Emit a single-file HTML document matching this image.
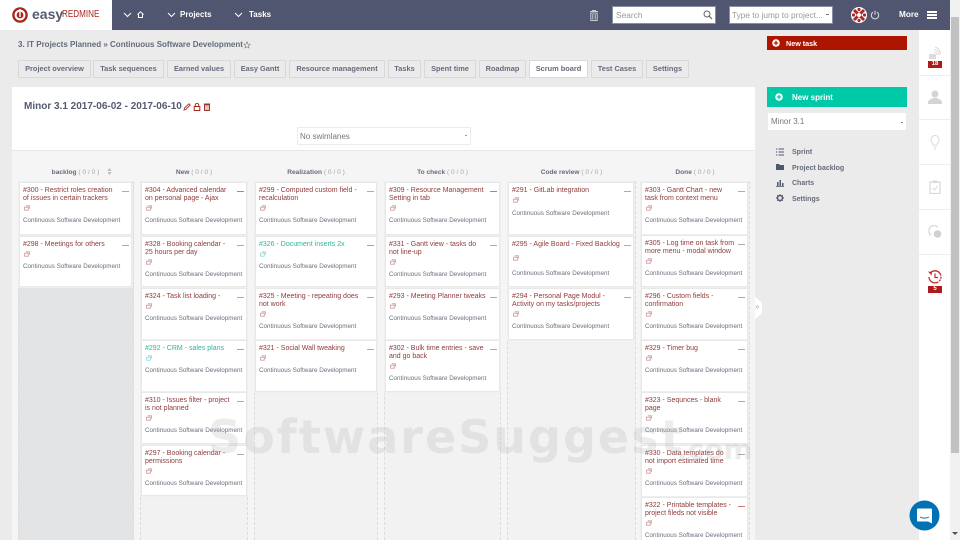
<!DOCTYPE html>
<html><head><meta charset="utf-8"><style>
html,body{margin:0;padding:0;width:960px;height:540px;overflow:hidden;background:#ebebeb;font-family:"Liberation Sans",sans-serif;color:#555b70}
body{filter:blur(.3px)}
div,span,svg,b,i{position:absolute;display:block}
.tb{top:60px;height:16px;border:1px solid #d9d9d9;line-height:16px;text-align:center;font-size:7.4px;font-weight:bold;color:#666b7c;background:#ebebeb;white-space:nowrap}
.col{top:181px;height:359px;background:#f2f2f2;border-left:1px dashed #dcdcdc;border-right:1px dashed #dcdcdc;box-sizing:border-box;border-top:2px solid #d8d8d8}
.h{top:168px;height:9px;line-height:9px;text-align:center;font-size:6.6px;font-weight:bold;color:#666b7c;white-space:nowrap}
.h em{font-style:normal;font-weight:normal;color:#a5a5a5}
.c{background:#fff;box-shadow:0 0 0 1px #e8e8e8,0 0 0 2px #efefef;font-size:7px;white-space:nowrap;overflow:hidden}
.c b{position:static;font-weight:normal;color:#8f3b3b;line-height:7.8px;margin:4px 0 0 3px}
.c.g b{color:#2fb59b}
.c svg{position:static;display:block;margin:2px 0 0 4px;width:6px;height:6px}
.c span{position:static;color:#6b6f7c;font-size:6.3px;line-height:8px;margin:6px 0 0 3px}
.c u{position:absolute;right:2px;top:8px;width:7px;height:1px;background:#aaa}
.c.r u{background:#c77}
.m{left:792px;font-size:7px;font-weight:bold;color:#666b7c;height:9px;line-height:9px}
.d{left:919px;width:31px;height:1px;background:#eee}
.bd{left:928px;width:14px;height:7px;background:#ae1a1a;color:#fff;font-size:6px;font-weight:bold;line-height:7px;text-align:center}
</style></head><body>

<div style="left:0;top:0;width:950px;height:30px;background:#50566f"></div>
<div style="left:0;top:0;width:112px;height:30px;background:#fff"></div>
<svg style="left:12px;top:7px" width="16" height="16" viewBox="0 0 16 16"><circle cx="8" cy="8" r="6.6" fill="none" stroke="#a8281e" stroke-width="2.4"/><circle cx="8" cy="8" r="3.4" fill="#a8281e"/><rect x="7.3" y="2" width="1.4" height="8" fill="#fff"/></svg>
<div style="left:32px;top:5px;font-size:14px;font-weight:bold;color:#555b70;line-height:19px">easy</div>
<div style="left:62px;top:9px;font-size:10.4px;color:#a8281e;line-height:12px;transform:scaleX(.78);transform-origin:left;white-space:nowrap">REDMINE</div>

<svg style="left:123px;top:12px" width="9" height="6" viewBox="0 0 9 6"><path d="M1 1l3.5 3.5L8 1" fill="none" stroke="#fff"/></svg>
<svg style="left:137px;top:11px" width="7" height="7" viewBox="0 0 7 7"><path d="M.5 3.5L3.5.8l3 2.7M1.5 3v3.5h4V3" fill="none" stroke="#fff"/></svg>
<svg style="left:167px;top:12px" width="9" height="6" viewBox="0 0 9 6"><path d="M1 1l3.5 3.5L8 1" fill="none" stroke="#fff"/></svg>
<div style="left:180px;top:10px;font-size:8px;font-weight:bold;color:#fff;line-height:10px">Projects</div>
<svg style="left:234px;top:12px" width="9" height="6" viewBox="0 0 9 6"><path d="M1 1l3.5 3.5L8 1" fill="none" stroke="#fff"/></svg>
<div style="left:249px;top:10px;font-size:8px;font-weight:bold;color:#fff;line-height:10px">Tasks</div>

<svg style="left:589px;top:10px" width="10" height="11" viewBox="0 0 10 11"><path d="M1 1.5h8M3.5 1.5V.5h3v1M1.8 3h6.4v7.5H1.8z" fill="none" stroke="#c9ccd5"/><path d="M3.8 4v5.5M6.2 4v5.5" stroke="#c9ccd5"/></svg>
<div style="left:612px;top:6px;width:104px;height:18px;background:#fff;border:1px solid #8a8fa0;box-sizing:border-box;font-size:8.4px;line-height:16px;color:#999;padding-left:3px">Search</div>
<svg style="left:703px;top:10px" width="10" height="10" viewBox="0 0 10 10"><circle cx="4" cy="4" r="3" fill="none" stroke="#666"/><path d="M6.2 6.2L9 9" stroke="#666" stroke-width="1.2"/></svg>
<div style="left:729px;top:6px;width:104px;height:18px;background:#fff;border:1px solid #8a8fa0;box-sizing:border-box;font-size:8.3px;line-height:16px;color:#999;padding-left:2px;white-space:nowrap">Type to jump to project...</div>
<div style="left:826px;top:14px;width:3px;height:1px;background:#777"></div>
<svg style="left:851px;top:7px" width="16" height="16" viewBox="0 0 16 16"><circle cx="8" cy="8" r="8" fill="#fff"/><path d="M3 3l10 10M13 3L3 13" stroke="#a8282c" stroke-width="3"/><circle cx="8" cy="8" r="2" fill="#fff"/><circle cx="8" cy="2.5" r="1.6" fill="#a8282c"/><circle cx="8" cy="13.5" r="1.6" fill="#a8282c"/><circle cx="2.5" cy="8" r="1.6" fill="#a8282c"/><circle cx="13.5" cy="8" r="1.6" fill="#a8282c"/></svg>
<svg style="left:870px;top:10px" width="10" height="10" viewBox="0 0 10 10"><path d="M2.9 2.2a3.7 3.7 0 1 0 4.2 0M5 .8v4" fill="none" stroke="#dfe1e7" stroke-width="1"/></svg>
<div style="left:899px;top:10px;font-size:8.2px;font-weight:bold;color:#fff;line-height:10px">More</div>
<div style="left:927px;top:11px;width:10px;height:1.5px;background:#fff"></div>
<div style="left:927px;top:14px;width:10px;height:1.5px;background:#fff"></div>
<div style="left:927px;top:17px;width:10px;height:1.5px;background:#fff"></div>

<div style="left:18px;top:40px;font-size:8px;font-weight:bold;color:#666b7c;line-height:10px;white-space:nowrap">3. IT Projects Planned » Continuous Software Development</div>
<svg style="left:243px;top:41px" width="8" height="8" viewBox="0 0 8 8"><path d="M4 .8l.9 2.2 2.3.2-1.8 1.500.6 2.300L4 5.800 2 7l.6-2.300L.8 3.200l2.300-.2z" fill="none" stroke="#777" stroke-width=".6"/></svg>

<div class="tb" style="left:18px;width:71px">Project overview</div>
<div class="tb" style="left:93px;width:69px">Task sequences</div>
<div class="tb" style="left:167px;width:62px">Earned values</div>
<div class="tb" style="left:234px;width:50px">Easy Gantt</div>
<div class="tb" style="left:289px;width:94px">Resource management</div>
<div class="tb" style="left:388px;width:31px">Tasks</div>
<div class="tb" style="left:424px;width:50px">Spent time</div>
<div class="tb" style="left:479px;width:45px">Roadmap</div>
<div class="tb" style="left:529px;width:57px;background:#fff">Scrum board</div>
<div class="tb" style="left:591px;width:50px">Test Cases</div>
<div class="tb" style="left:646px;width:41px">Settings</div>

<div style="left:12px;top:87px;width:743px;height:63px;background:#fff"></div>
<div style="left:12px;top:150px;width:743px;height:390px;background:#f5f5f5;border-top:1px solid #e8e8e8;box-sizing:border-box"></div>
<div style="left:24px;top:100px;font-size:10px;font-weight:bold;color:#555b70;line-height:13px;white-space:nowrap">Minor 3.1 2017-06-02 - 2017-06-10</div>
<svg style="left:183px;top:103px" width="8" height="8" viewBox="0 0 8 8"><path d="M1 7l.5-2L6 .8l1.200 1.200L2.800 6.500z" fill="none" stroke="#9a3a30" stroke-width=".9"/></svg>
<svg style="left:193px;top:103px" width="8" height="8" viewBox="0 0 8 8"><path d="M2.300 3.500V2a1.700 1.700 0 0 1 3.400 0v1.500M1.200 3.500h5.600v4H1.200z" fill="none" stroke="#a8281e"/></svg>
<svg style="left:203px;top:103px" width="8" height="8" viewBox="0 0 8 8"><path d="M.8 1h6.400M1.500 2h5v5.500h-5z" fill="none" stroke="#9a3a30"/><path d="M3 3v4M5 3v4" stroke="#9a3a30" stroke-width=".6"/></svg>

<div style="left:297px;top:127px;width:174px;height:18px;background:#fff;border:1px solid #ececec;box-sizing:border-box;font-size:8px;line-height:17px;color:#777;padding-left:2px">No swimlanes</div>
<div style="left:465px;top:135px;width:2px;height:1px;background:#999"></div>

<div class="h" style="left:18px;width:115px">backlog <em style="position:static;display:inline">( 0 / 0 )</em></div>
<svg style="left:107px;top:168px" width="5" height="7" viewBox="0 0 5 7"><path d="M2.500 0l2 3h-4zM2.500 7l2-3h-4z" fill="#bbb"/></svg>
<div class="h" style="left:140px;width:108px">New <em style="position:static;display:inline">( 0 / 0 )</em></div>
<div class="h" style="left:254px;width:124px">Realization <em style="position:static;display:inline">( 0 / 0 )</em></div>
<div class="h" style="left:384px;width:117px">To check <em style="position:static;display:inline">( 0 / 0 )</em></div>
<div class="h" style="left:507px;width:129px">Code review <em style="position:static;display:inline">( 0 / 0 )</em></div>
<div class="h" style="left:640px;width:110px">Done <em style="position:static;display:inline">( 0 / 0 )</em></div>

<div class="col" style="left:18px;width:116px;background:#e3e4e6"></div>
<div class="col" style="left:140px;width:108px"></div>
<div class="col" style="left:254px;width:124px"></div>
<div class="col" style="left:384px;width:117px"></div>
<div class="col" style="left:507px;width:129px"></div>
<div class="col" style="left:640px;width:110px"></div>

<svg width="0" height="0" style="left:0;top:0"><defs><symbol id="ic" viewBox="0 0 6 6"><path d="M1.800.8h3.700v3M.6 2.200h3.700v3H.6z" fill="none" stroke="#c99" stroke-width=".8"/></symbol><symbol id="ig" viewBox="0 0 6 6"><path d="M1.800.8h3.700v3M.6 2.200h3.700v3H.6z" fill="none" stroke="#8dd" stroke-width=".8"/></symbol></defs></svg>

<div class="c" style="left:20px;top:183px;width:111px;height:51px"><b>#300 - Restrict roles creation<br>of issues in certain trackers</b><svg><use href="#ic"/></svg><span>Continuous Software Development</span><u></u></div>
<div class="c" style="left:20px;top:237px;width:111px;height:49px"><b>#298 - Meetings for others</b><svg><use href="#ic"/></svg><span>Continuous Software Development</span><u></u></div>

<div class="c r" style="left:142px;top:183px;width:104px;height:51px"><b>#304 - Advanced calendar<br>on personal page - Ajax</b><svg><use href="#ic"/></svg><span>Continuous Software Development</span><u></u></div>
<div class="c" style="left:142px;top:237px;width:104px;height:49px"><b>#328 - Booking calendar -<br>25 hours per day</b><svg><use href="#ic"/></svg><span>Continuous Software Development</span><u></u></div>
<div class="c" style="left:142px;top:289px;width:104px;height:50px"><b>#324 - Task list loading -</b><svg><use href="#ic"/></svg><span>Continuous Software Development</span><u></u></div>
<div class="c g" style="left:142px;top:341px;width:104px;height:50px"><b>#292 - CRM - sales plans</b><svg><use href="#ig"/></svg><span>Continuous Software Development</span><u style="background:#5cb"></u></div>
<div class="c" style="left:142px;top:393px;width:104px;height:50px"><b>#310 - Issues filter - project<br>is not planned</b><svg><use href="#ic"/></svg><span>Continuous Software Development</span><u></u></div>
<div class="c" style="left:142px;top:446px;width:104px;height:49px"><b>#297 - Booking calendar -<br>permissions</b><svg><use href="#ic"/></svg><span>Continuous Software Development</span><u></u></div>

<div class="c" style="left:256px;top:183px;width:120px;height:51px"><b>#299 - Computed custom field -<br>recalculation</b><svg><use href="#ic"/></svg><span>Continuous Software Development</span><u></u></div>
<div class="c g" style="left:256px;top:237px;width:120px;height:49px"><b>#326 - Document inserts 2x</b><svg><use href="#ig"/></svg><span>Continuous Software Development</span><u style="background:#5cb"></u></div>
<div class="c" style="left:256px;top:289px;width:120px;height:50px"><b>#325 - Meeting - repeating does<br>not work</b><svg><use href="#ic"/></svg><span>Continuous Software Development</span><u></u></div>
<div class="c" style="left:256px;top:341px;width:120px;height:50px"><b>#321 - Social Wall tweaking</b><svg><use href="#ic"/></svg><span>Continuous Software Development</span><u></u></div>

<div class="c r" style="left:386px;top:183px;width:113px;height:51px"><b>#309 - Resource Management<br>Setting in tab</b><svg><use href="#ic"/></svg><span>Continuous Software Development</span><u></u></div>
<div class="c" style="left:386px;top:237px;width:113px;height:49px"><b>#331 - Gantt view - tasks do<br>not line-up</b><svg><use href="#ic"/></svg><span>Continuous Software Development</span><u></u></div>
<div class="c" style="left:386px;top:289px;width:113px;height:50px"><b>#293 - Meeting Planner tweaks</b><svg><use href="#ic"/></svg><span>Continuous Software Development</span><u></u></div>
<div class="c" style="left:386px;top:341px;width:113px;height:50px"><b>#302 - Bulk time entries - save<br>and go back</b><svg><use href="#ic"/></svg><span>Continuous Software Development</span><u></u></div>

<div class="c" style="left:509px;top:183px;width:124px;height:51px"><b>#291 - GitLab integration</b><svg><use href="#ic"/></svg><span style="margin-top:7px">Continuous Software Development</span><u></u></div>
<div class="c" style="left:509px;top:237px;width:124px;height:49px"><b>#295 - Agile Board - Fixed Backlog</b><svg style="margin-top:6px"><use href="#ic"/></svg><span style="margin-top:9px">Continuous Software Development</span><u></u></div>
<div class="c" style="left:509px;top:289px;width:124px;height:50px"><b>#294 - Personal Page Modul -<br>Activity on my tasks/projects</b><svg><use href="#ic"/></svg><span>Continuous Software Development</span><u></u></div>

<div class="c" style="left:642px;top:183px;width:105px;height:51px"><b>#303 - Gantt Chart - new<br>task from context menu</b><svg><use href="#ic"/></svg><span>Continuous Software Development</span><u></u></div>
<div class="c" style="left:642px;top:236px;width:105px;height:50px"><b>#305 - Log time on task from<br>more menu - modal window</b><svg><use href="#ic"/></svg><span>Continuous Software Development</span><u></u></div>
<div class="c" style="left:642px;top:289px;width:105px;height:50px"><b>#296 - Custom fields -<br>confirmation</b><svg><use href="#ic"/></svg><span>Continuous Software Development</span><u></u></div>
<div class="c" style="left:642px;top:341px;width:105px;height:50px"><b>#329 - Timer bug</b><svg><use href="#ic"/></svg><span>Continuous Software Development</span><u></u></div>
<div class="c" style="left:642px;top:393px;width:105px;height:50px"><b>#323 - Sequnces - blank<br>page</b><svg><use href="#ic"/></svg><span>Continuous Software Development</span><u></u></div>
<div class="c" style="left:642px;top:446px;width:105px;height:50px"><b>#330 - Data templates do<br>not import estimated time</b><svg><use href="#ic"/></svg><span>Continuous Software Development</span><u></u></div>
<div class="c r" style="left:642px;top:498px;width:105px;height:42px"><b>#322 - Printable templates -<br>project fileds not visible</b><svg><use href="#ic"/></svg><span>Continuous Software Development</span><u></u></div>

<svg style="left:755px;top:297px" width="7" height="22" viewBox="0 0 7 22"><path d="M0 0l7 6v10l-7 6z" fill="#fff"/></svg>
<div style="left:755px;top:302px;font-size:8px;line-height:10px;color:#aaa">»</div>

<div style="left:767px;top:36px;width:140px;height:14px;background:#ae1500"></div>
<svg style="left:772px;top:39px" width="8" height="8" viewBox="0 0 8 8"><circle cx="4" cy="4" r="3.800" fill="#fff"/><path d="M4 1.800v4.400M1.800 4h4.400" stroke="#ae1500" stroke-width="1.200"/></svg>
<div style="left:786px;top:39px;font-size:7.2px;font-weight:bold;color:#fff;line-height:10px">New task</div>
<div style="left:767px;top:87px;width:140px;height:20px;background:#00c9a7"></div>
<svg style="left:775px;top:93px" width="8" height="8" viewBox="0 0 8 8"><circle cx="4" cy="4" r="3.800" fill="#fff"/><path d="M4 1.800v4.400M1.800 4h4.400" stroke="#00c9a7" stroke-width="1.200"/></svg>
<div style="left:792px;top:92px;font-size:8px;font-weight:bold;color:#fff;line-height:11px">New sprint</div>
<div style="left:768px;top:113px;width:138px;height:17px;background:#fff;font-size:8px;line-height:17px;color:#777;padding-left:3px;box-sizing:border-box">Minor 3.1</div>
<div style="left:901px;top:122px;width:2px;height:1px;background:#888"></div>

<svg style="left:776px;top:148px" width="8" height="8" viewBox="0 0 8 8"><path d="M2.500 1H8M2.500 4H8M2.500 7H8M0 1h1.200M0 4h1.200M0 7h1.200" stroke="#50566f"/></svg>
<svg style="left:776px;top:163px" width="8" height="8" viewBox="0 0 8 8"><path d="M0 1h3l1 1h4v5H0z" fill="#50566f"/></svg>
<svg style="left:776px;top:179px" width="8" height="8" viewBox="0 0 8 8"><path d="M1 3h1.500v4H1zM3.500 1H5v6H3.500zM6 4h1.500v3H6zM0 7.300h8V8H0z" fill="#50566f"/></svg>
<svg style="left:776px;top:194px" width="8" height="8" viewBox="0 0 8 8"><circle cx="4" cy="4" r="2.500" fill="none" stroke="#50566f" stroke-width="1.500"/><path d="M4 0v8M0 4h8M1.200 1.200l5.600 5.600M6.800 1.200L1.200 6.800" stroke="#50566f" stroke-width=".9" stroke-dasharray="1.200 5.600 1.200"/></svg>
<div class="m" style="top:148px">Sprint</div>
<div class="m" style="top:164px;white-space:nowrap">Project backlog</div>
<div class="m" style="top:179px">Charts</div>
<div class="m" style="top:195px">Settings</div>

<div style="left:919px;top:30px;width:31px;height:510px;background:#fff"></div>
<div class="d" style="top:75px"></div><div class="d" style="top:119px"></div><div class="d" style="top:164px"></div><div class="d" style="top:209px"></div><div class="d" style="top:254px"></div>
<svg style="left:929px;top:46px" width="12" height="14" viewBox="0 0 12 14"><path d="M0 8h7v5H0z" fill="#dcdcdc"/><path d="M5 6a3 3 0 0 1 3 3M5 3.500A5.500 5.500 0 0 1 10 9M6 1a7 7 0 0 1 5.500 7" fill="none" stroke="#dcdcdc" stroke-width="1.100"/></svg>
<div class="bd" style="top:61px">18</div>
<svg style="left:928px;top:90px" width="14" height="14" viewBox="0 0 14 14"><circle cx="7" cy="4" r="3.500" fill="#d4d4d4"/><path d="M0 14v-2c0-2 4-3 5-4h4c1 1 5 2 5 4v2z" fill="#d4d4d4"/></svg>
<svg style="left:930px;top:135px" width="10" height="15" viewBox="0 0 10 15"><path d="M3 10C3 8 1 7 1 4.500a4 4 0 0 1 8 0C9 7 7 8 7 10zM3.500 12h3M4 14h2" fill="none" stroke="#dcdcdc" stroke-width="1.100"/></svg>
<svg style="left:929px;top:180px" width="12" height="14" viewBox="0 0 12 14"><path d="M1 2h10v11.500H1z" fill="none" stroke="#d8d8d8" stroke-width="1.200"/><path d="M4 .5h4V3H4z" fill="#d8d8d8"/><path d="M3.500 8l2 2 3-4" fill="none" stroke="#d8d8d8"/></svg>
<svg style="left:928px;top:225px" width="14" height="14" viewBox="0 0 14 14"><path d="M2 9A5 5 0 0 1 10 2.500" fill="none" stroke="#d8d8d8" stroke-width="1.200"/><path d="M1 11l1-3 1.500 2z" fill="#d8d8d8"/><circle cx="9.500" cy="9" r="3.800" fill="#d0d0d0"/></svg>
<svg style="left:928px;top:270px" width="14" height="14" viewBox="0 0 14 14"><path d="M2 3.500A6 6 0 1 1 1 7" fill="none" stroke="#c42d2d" stroke-width="1.300" stroke-dasharray="14 1 2 1 2 1"/><path d="M0 1.500l4 .5-.5 3.500z" fill="#c42d2d"/><path d="M7 3.500V7.500h3" fill="none" stroke="#c42d2d" stroke-width="1.200"/></svg>
<div class="bd" style="top:286px">5</div>

<div style="left:950px;top:0;width:10px;height:540px;background:#f1f1f1"></div>
<div style="left:951px;top:17px;width:8px;height:436px;background:#c1c1c1"></div>
<svg style="left:952px;top:532px" width="6" height="4" viewBox="0 0 6 4"><path d="M0 0h6L3 3z" fill="#505050"/></svg>

<div style="left:208px;top:404px;font-family:'DejaVu Sans',sans-serif;font-size:46px;font-weight:bold;color:rgba(180,180,180,.25);line-height:66px;white-space:nowrap;letter-spacing:2px">SoftwareSuggest</div>
<div style="left:677px;top:434px;font-family:'DejaVu Sans',sans-serif;font-size:28px;font-weight:bold;color:rgba(180,180,180,.25);line-height:32px;white-space:nowrap">.com</div>

<svg style="left:909px;top:500px" width="31" height="31" viewBox="0 0 31 31"><circle cx="15.500" cy="15.500" r="15" fill="#0071b2"/><path d="M9 8.500h13a1 1 0 0 1 1 1v14l-4-2H9a1 1 0 0 1-1-1v-11a1 1 0 0 1 1-1z" fill="#fff"/><path d="M11 17c2.500 1.500 6.500 1.500 9 0" fill="none" stroke="#0071b2"/></svg>
</body></html>
